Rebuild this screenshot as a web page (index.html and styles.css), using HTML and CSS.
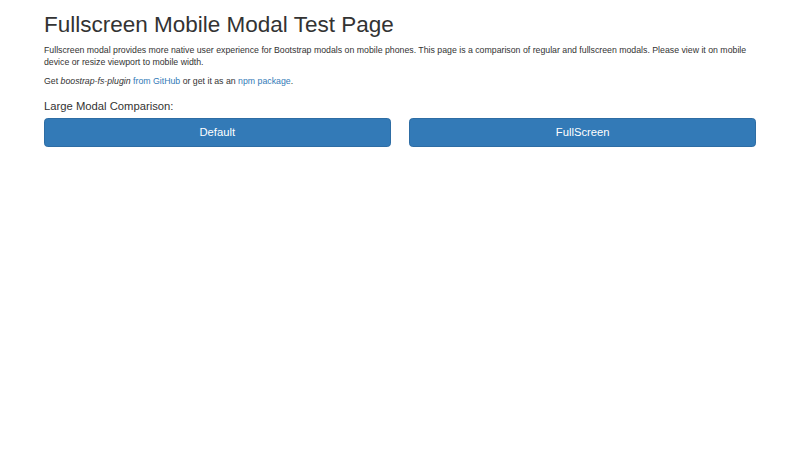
FILE: index.html
```html
<!DOCTYPE html>
<html lang="en">
<head>
<meta charset="utf-8">
<title>Fullscreen Mobile Modal Test Page</title>
<link rel="stylesheet" href="styles.css">
</head>
<body>
<div class="page">
  <h1 class="title">Fullscreen Mobile Modal Test Page</h1>
  <p class="text">Fullscreen modal provides more native user experience for Bootstrap modals on mobile phones. This page is a comparison of regular and fullscreen modals. Please view it on mobile device or resize viewport to mobile width.</p>
  <p class="text">Get <em>boostrap-fs-plugin</em> <a href="#">from GitHub</a> or get it as an <a href="#">npm package</a>.</p>
  <h4 class="section">Large Modal Comparison:</h4>
  <div class="buttons">
    <button class="btn" type="button">Default</button>
    <button class="btn" type="button">FullScreen</button>
  </div>
</div>
</body>
</html>
```
FILE: styles.css
```css
html, body {
  margin: 0;
  padding: 0;
  background: #fff;
}
.page {
  padding: 0 44px;
  font-family: "Liberation Sans", Arial, sans-serif;
  font-size: 8.75px;
  line-height: 12.5px;
  color: #333;
}
.title {
  font-size: 22.5px;
  font-weight: 400;
  line-height: 1.1;
  margin: 12.5px 0 6.25px;
}
.text {
  margin: 0 0 6.25px;
}
.text a {
  color: #337ab7;
  text-decoration: none;
}
.section {
  font-size: 11.25px;
  font-weight: 400;
  line-height: 1.1;
  margin: 12.5px 0 6.25px;
}
.buttons {
  display: grid;
  grid-template-columns: 1fr 1fr;
  column-gap: 18.75px;
}
.btn {
  height: 28.75px;
  background: #337ab7;
  border: 0.625px solid #2e6da4;
  border-radius: 3.75px;
  color: #fff;
  font-family: "Liberation Sans", Arial, sans-serif;
  font-size: 11.25px;
  line-height: 1.3333;
  padding: 0 10px;
}
```
